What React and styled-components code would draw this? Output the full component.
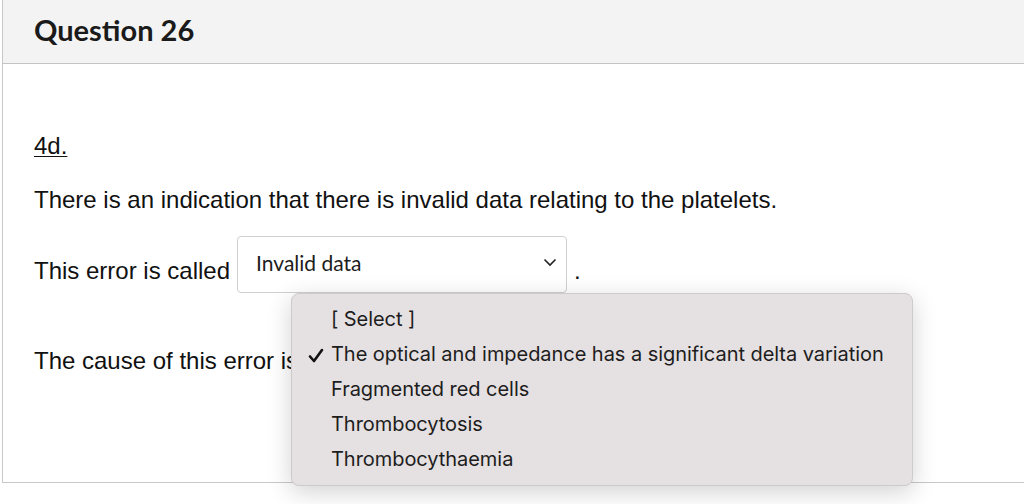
import styled, { createGlobalStyle } from 'styled-components';

const GlobalStyle = createGlobalStyle`
  body {
    margin: 0;
    background: #ffffff;
    font-family: "Liberation Sans", Arial, sans-serif;
    color: #111;
  }
`;

const Page = styled.div`
  width: 1024px;
  height: 504px;
  overflow: hidden;
  box-sizing: border-box;
  padding-left: 2px;
`;

const Card = styled.div`
  position: relative;
  border-left: 1px solid #c8c8c8;
  border-bottom: 1px solid #c8c8c8;
  height: 483px;
  box-sizing: border-box;
`;

const Header = styled.div`
  height: 64px;
  box-sizing: border-box;
  background: #f3f3f3;
  border-bottom: 1px solid #c4c4c4;
  padding: 12px 0 0 31px;
`;

const Title = styled.h2`
  margin: 0;
  font-family: Lato, sans-serif;
  font-weight: 700;
  font-size: 29px;
  line-height: 36px;
  color: #1a1a1a;
`;

const Body = styled.div`
  padding: 68px 0 0 31px;
  font-size: 24px;
  line-height: 28px;
`;

const Label = styled.p`
  margin: 0 0 ${({ $gap }) => $gap}px;
  text-decoration: ${({ $underline }) => ($underline ? 'underline' : 'none')};
  text-underline-offset: 2px;
  text-decoration-thickness: 1px;
`;

const Row = styled.div`
  display: flex;
  align-items: center;
  margin-bottom: ${({ $gap }) => $gap}px;
`;

const RowText = styled.span`
  padding-top: 12px;
`;

const SelectBox = styled.div`
  margin-left: 7px;
  width: 330px;
  height: 57px;
  box-sizing: border-box;
  border: 1px solid #d0d0d0;
  border-radius: 4px;
  display: flex;
  align-items: center;
  justify-content: space-between;
  padding: 0 9px 4px 18px;
  font-family: Lato, sans-serif;
  font-size: 21px;
  color: #1c1c1c;
`;

const Dot = styled.span`
  margin-left: 7px;
  padding-top: 12px;
`;

const Menu = styled.ul`
  position: absolute;
  left: 288px;
  top: 293px;
  width: 622px;
  height: 193px;
  box-sizing: border-box;
  margin: 0;
  padding: 8px 0 0;
  list-style: none;
  background: #e5e0e1;
  border: 1px solid #cfcacb;
  border-radius: 8px;
  box-shadow: 0 6px 24px rgba(0, 0, 0, 0.18);
  font-family: Inter, "Noto Sans", sans-serif;
  font-size: 20px;
  color: #1d1d1d;
`;

const Option = styled.li`
  position: relative;
  height: 35px;
  line-height: 35px;
  padding-left: 39px;
  letter-spacing: -0.05px;
`;

const Check = styled.svg`
  position: absolute;
  left: 16px;
  top: 11px;
`;

const options = [
  '[ Select ]',
  'The optical and impedance has a significant delta variation',
  'Fragmented red cells',
  'Thrombocytosis',
  'Thrombocythaemia',
];

export default function App() {
  return (
    <Page>
      <GlobalStyle />
      <Card>
        <Header>
          <Title>Question 26</Title>
        </Header>
        <Body>
          <Label $underline $gap={26}>4d.</Label>
          <Label $gap={22}>There is an indication that there is invalid data relating to the platelets.</Label>
          <Row $gap={54}>
            <RowText>This error is called</RowText>
            <SelectBox>
              <span>Invalid data</span>
              <svg width="14" height="9" viewBox="0 0 14 9">
                <path d="M1.5 1.5 L7 7 L12.5 1.5" fill="none" stroke="#222" strokeWidth="1.6" />
              </svg>
            </SelectBox>
            <Dot>.</Dot>
          </Row>
          <Label $gap={0}>The cause of this error is</Label>
        </Body>
        <Menu>
          {options.map((o, i) => (
            <Option key={o}>
              {i === 1 && (
                <Check width="16" height="15" viewBox="0 0 16 15">
                  <path d="M2 8.5 L6 13 L14 2" fill="none" stroke="#111" strokeWidth="2.6" strokeLinecap="round" strokeLinejoin="round" />
                </Check>
              )}
              {o}
            </Option>
          ))}
        </Menu>
      </Card>
    </Page>
  );
}
